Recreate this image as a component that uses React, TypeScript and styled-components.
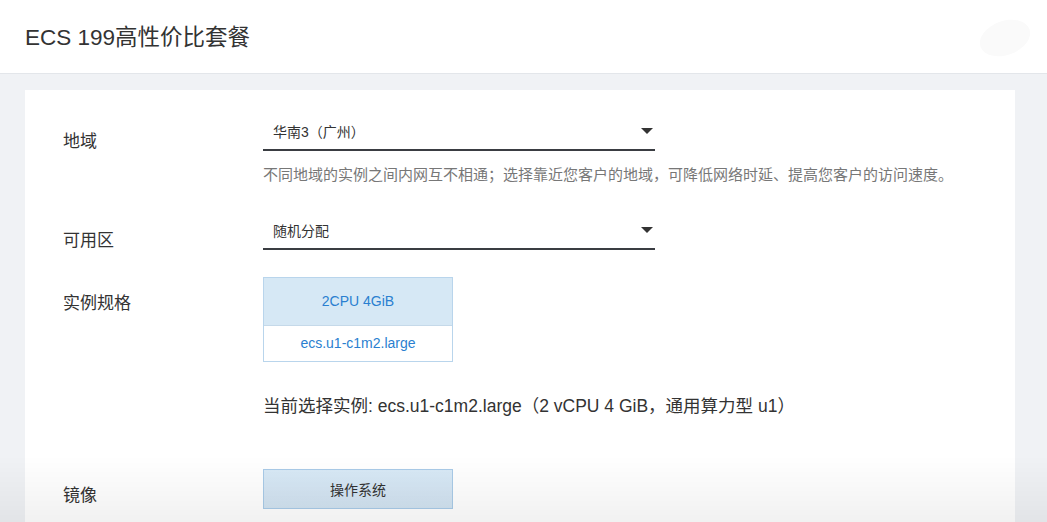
import React from "react";
import styled, { createGlobalStyle } from "styled-components";

const GlobalStyle = createGlobalStyle`
  html, body {
    margin: 0;
    padding: 0;
    background: #f0f2f5;
    font-family: "Liberation Sans", "Noto Sans CJK SC", sans-serif;
    color: #333;
    overflow: hidden;
  }
`;

const Header = styled.header`
  height: 73px;
  background: #fff;
  border-bottom: 1px solid #e3e6ea;
  display: flex;
  align-items: center;
  justify-content: space-between;
  padding: 0 14px 0 25px;
  position: relative;

  h1 {
    margin: 0;
    font-size: 22.5px;
    font-weight: normal;
    color: #333;
    padding-bottom: 3px;
  }
`;

const Body = styled.main`
  padding: 16px 32px 0 25px;
`;

const Card = styled.div`
  background: #fff;
  padding: 29px 0 0 38px;
  min-height: 440px;
`;

const Row = styled.div<{ $gap?: number }>`
  display: grid;
  grid-template-columns: 200px 1fr;
  margin-bottom: ${(p) => p.$gap ?? 0}px;
`;

const Label = styled.div<{ $top?: number }>`
  font-size: 17px;
  color: #333;
  padding-top: ${(p) => p.$top ?? 0}px;
`;

const Select = styled.div`
  width: 392px;
  height: 32px;
  border-bottom: 2px solid #3a3d42;
  display: flex;
  align-items: center;
  justify-content: space-between;
  padding: 0 2px 6px 10px;
  box-sizing: border-box;
  font-size: 14px;
  color: #333;
`;

const Caret = styled.span`
  width: 0;
  height: 0;
  border-left: 6px solid transparent;
  border-right: 6px solid transparent;
  border-top: 6px solid #333;
`;

const Hint = styled.div`
  font-size: 15px;
  color: #777;
  margin-top: 12px;
`;

const SpecCard = styled.div`
  width: 190px;
  border: 1px solid #b9d5ec;
  box-sizing: border-box;
  font-size: 14px;
  color: #2a7fd0;
  text-align: center;
`;

const SpecHead = styled.div`
  height: 47px;
  line-height: 47px;
  background: #d6e8f5;
  border-bottom: 1px solid #c5d9e9;
`;

const SpecBody = styled.div`
  height: 35px;
  line-height: 35px;
  background: #fff;
`;

const Current = styled.div`
  font-size: 17.5px;
  color: #333;
  margin-top: 30px;
`;

const OsButton = styled.div`
  width: 190px;
  height: 40px;
  box-sizing: border-box;
  border: 1px solid #a9cbe8;
  background: linear-gradient(to bottom, #d8e9f6, #d2e3f1);
  display: flex;
  align-items: center;
  justify-content: center;
  font-size: 14px;
  color: #333;
`;

const BottomFade = styled.div`
  position: fixed;
  left: 0;
  right: 0;
  bottom: 0;
  height: 66px;
  pointer-events: none;
  background: linear-gradient(to bottom, rgba(0, 0, 0, 0), rgba(0, 0, 0, 0.055));
`;

const Blob = styled.svg`
  position: absolute;
  right: 14px;
  top: 18px;
`;

export default function App() {
  return (
    <>
      <GlobalStyle />
      <Header>
        <h1>ECS 199高性价比套餐</h1>
        <Blob width="56" height="40" viewBox="0 0 56 40">
          <ellipse cx="28" cy="20" rx="26" ry="17" fill="#fafafa" transform="rotate(-20 28 20)" />
        </Blob>
      </Header>
      <Body>
        <Card>
          <Row $gap={34}>
            <Label $top={8}>地域</Label>
            <div>
              <Select>
                <span>华南3（广州）</span>
                <Caret />
              </Select>
              <Hint>不同地域的实例之间内网互不相通；选择靠近您客户的地域，可降低网络时延、提高您客户的访问速度。</Hint>
            </div>
          </Row>
          <Row $gap={26}>
            <Label $top={8}>可用区</Label>
            <Select>
              <span>随机分配</span>
              <Caret />
            </Select>
          </Row>
          <Row $gap={52}>
            <Label $top={12}>实例规格</Label>
            <div>
              <SpecCard>
                <SpecHead>2CPU 4GiB</SpecHead>
                <SpecBody>ecs.u1-c1m2.large</SpecBody>
              </SpecCard>
              <Current>当前选择实例: ecs.u1-c1m2.large（2 vCPU 4 GiB，通用算力型 u1）</Current>
            </div>
          </Row>
          <Row>
            <Label $top={12}>镜像</Label>
            <OsButton>操作系统</OsButton>
          </Row>
        </Card>
      </Body>
      <BottomFade />
    </>
  );
}
